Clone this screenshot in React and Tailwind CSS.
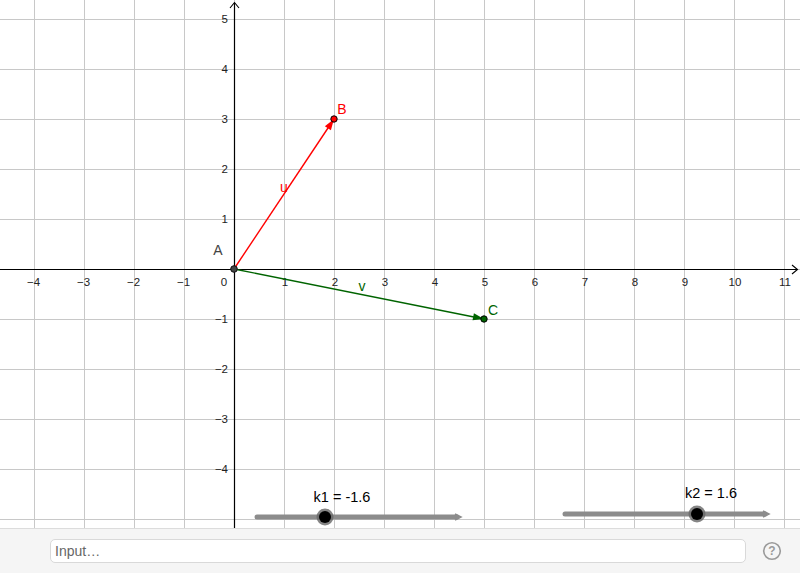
import React from "react";

const O = { x: 234, y: 269 };
const U = 50;
const px = (v) => O.x + v * U;
const py = (v) => O.y - v * U;

function Arrow({ x1, y1, x2, y2, color }) {
  const dx = x2 - x1, dy = y2 - y1;
  const L = Math.hypot(dx, dy);
  const ux = dx / L, uy = dy / L;
  const len = 11, w = 3.6;
  const bx = x2 - ux * len, by = y2 - uy * len;
  const p1 = `${bx - uy * w},${by + ux * w}`;
  const p2 = `${bx + uy * w},${by - ux * w}`;
  return (
    <g>
      <line x1={x1} y1={y1} x2={bx + ux * 2} y2={by + uy * 2} stroke={color} strokeWidth="1.4" />
      <polygon points={`${x2},${y2} ${p1} ${p2}`} fill={color} />
    </g>
  );
}

function Slider({ x1, x2, y, knob, label, lx, ly }) {
  return (
    <g>
      <line x1={x1} y1={y} x2={x2 - 3} y2={y} stroke="#8c8c8c" strokeWidth="5" strokeLinecap="round" />
      <path d={`M${x2 - 5},${y - 3} L${x2 + 1},${y} L${x2 - 5},${y + 3}`} fill="none" stroke="#8c8c8c" strokeWidth="1.5" />
      <circle cx={knob} cy={y} r="8.5" fill="#666" opacity="0.8" />
      <circle cx={knob} cy={y} r="6" fill="#000" />
      <text x={lx} y={ly} fontSize="14.5" fill="#000" textAnchor="middle">{label}</text>
    </g>
  );
}

export default function App() {
  const xs = [];
  for (let k = -5; k <= 12; k++) xs.push(k);
  const ys = [];
  for (let k = -6; k <= 6; k++) ys.push(k);
  const minus = "\u2212";
  return (
    <div className="w-[800px] h-[573px] flex flex-col bg-white overflow-hidden" style={{ fontFamily: '"Liberation Sans", Arial, sans-serif' }}>
      <div className="h-[528px] relative bg-white">
        <svg width="800" height="528" className="block" style={{ fontFamily: '"Liberation Sans", Arial, sans-serif' }}>
          {xs.map((k) => (
            <line key={"gx" + k} x1={px(k) + 0.5} y1="0" x2={px(k) + 0.5} y2="528" stroke="#c8c8c8" strokeWidth="1" />
          ))}
          {ys.map((k) => (
            <line key={"gy" + k} x1="0" y1={py(k) + 0.5} x2="800" y2={py(k) + 0.5} stroke="#c8c8c8" strokeWidth="1" />
          ))}
          <line x1="0" y1={O.y + 0.5} x2="797" y2={O.y + 0.5} stroke="#000" strokeWidth="1.2" />
          <path d="M792,265 L797.5,269.5 L792,274" fill="none" stroke="#000" strokeWidth="1.1" />
          <line x1={O.x + 0.5} y1="528" x2={O.x + 0.5} y2="3" stroke="#000" strokeWidth="1.2" />
          <path d="M230,8 L234.5,2.5 L239,8" fill="none" stroke="#000" strokeWidth="1.1" />
          {[-4, -3, -2, -1, 1, 2, 3, 4, 5, 6, 7, 8, 9, 10, 11].map((k) => (
            <text key={"lx" + k} x={px(k) + (k < 0 ? -0.5 : 1)} y="286" fontSize="11.5" fill="#222" textAnchor="middle">
              {k < 0 ? minus + Math.abs(k) : k}
            </text>
          ))}
          <text x="224" y="286" fontSize="11.5" fill="#222" textAnchor="middle">0</text>
          {[5, 4, 3, 2, 1, -1, -2, -3, -4].map((k) => (
            <text key={"ly" + k} x="228" y={py(k) + 4} fontSize="11.5" fill="#222" textAnchor="end">
              {k < 0 ? minus + Math.abs(k) : k}
            </text>
          ))}
          <Arrow x1={O.x} y1={O.y} x2={px(2)} y2={py(3)} color="#ff0000" />
          <Arrow x1={O.x} y1={O.y} x2={px(5)} y2={py(-1)} color="#006400" />
          <text x="284" y="192" fontSize="14" fill="#ff0000" textAnchor="middle">u</text>
          <text x="362" y="291" fontSize="14" fill="#006400" textAnchor="middle">v</text>
          <circle cx={O.x} cy={O.y} r="3.3" fill="#444" stroke="#111" strokeWidth="1" />
          <text x="218" y="255" fontSize="14" fill="#444" textAnchor="middle">A</text>
          <circle cx={px(2)} cy={py(3)} r="3.2" fill="#ff0000" stroke="#000" strokeWidth="1" />
          <text x="342" y="114" fontSize="14" fill="#ff0000" textAnchor="middle">B</text>
          <circle cx={px(5)} cy={py(-1)} r="3.2" fill="#006400" stroke="#000" strokeWidth="1" />
          <text x="493" y="315" fontSize="14" fill="#006400" textAnchor="middle">C</text>
          <Slider x1={257} x2={460} y={517} knob={325} label="k1 = -1.6" lx={342} ly={502} />
          <Slider x1={565} x2={768} y={514} knob={697} label="k2 = 1.6" lx={711} ly={498} />
        </svg>
      </div>
      <div className="flex-1 flex items-center bg-[#f5f5f5] border-t border-[#dcdcdc] pl-[50px] pr-[18px] gap-[16px]">
        <div className="flex-1 h-[24px] bg-white border border-[#d9d9d9] rounded-[5px] flex items-center pl-[4px] text-[14px] text-[#666]">
          Input…
        </div>
        <svg width="20" height="20" viewBox="0 0 20 20">
          <circle cx="10" cy="10" r="8.3" fill="none" stroke="#9a9a9a" strokeWidth="1.6" />
          <text x="10" y="14.3" fontSize="12" fontWeight="bold" fill="#9a9a9a" textAnchor="middle">?</text>
        </svg>
      </div>
    </div>
  );
}
